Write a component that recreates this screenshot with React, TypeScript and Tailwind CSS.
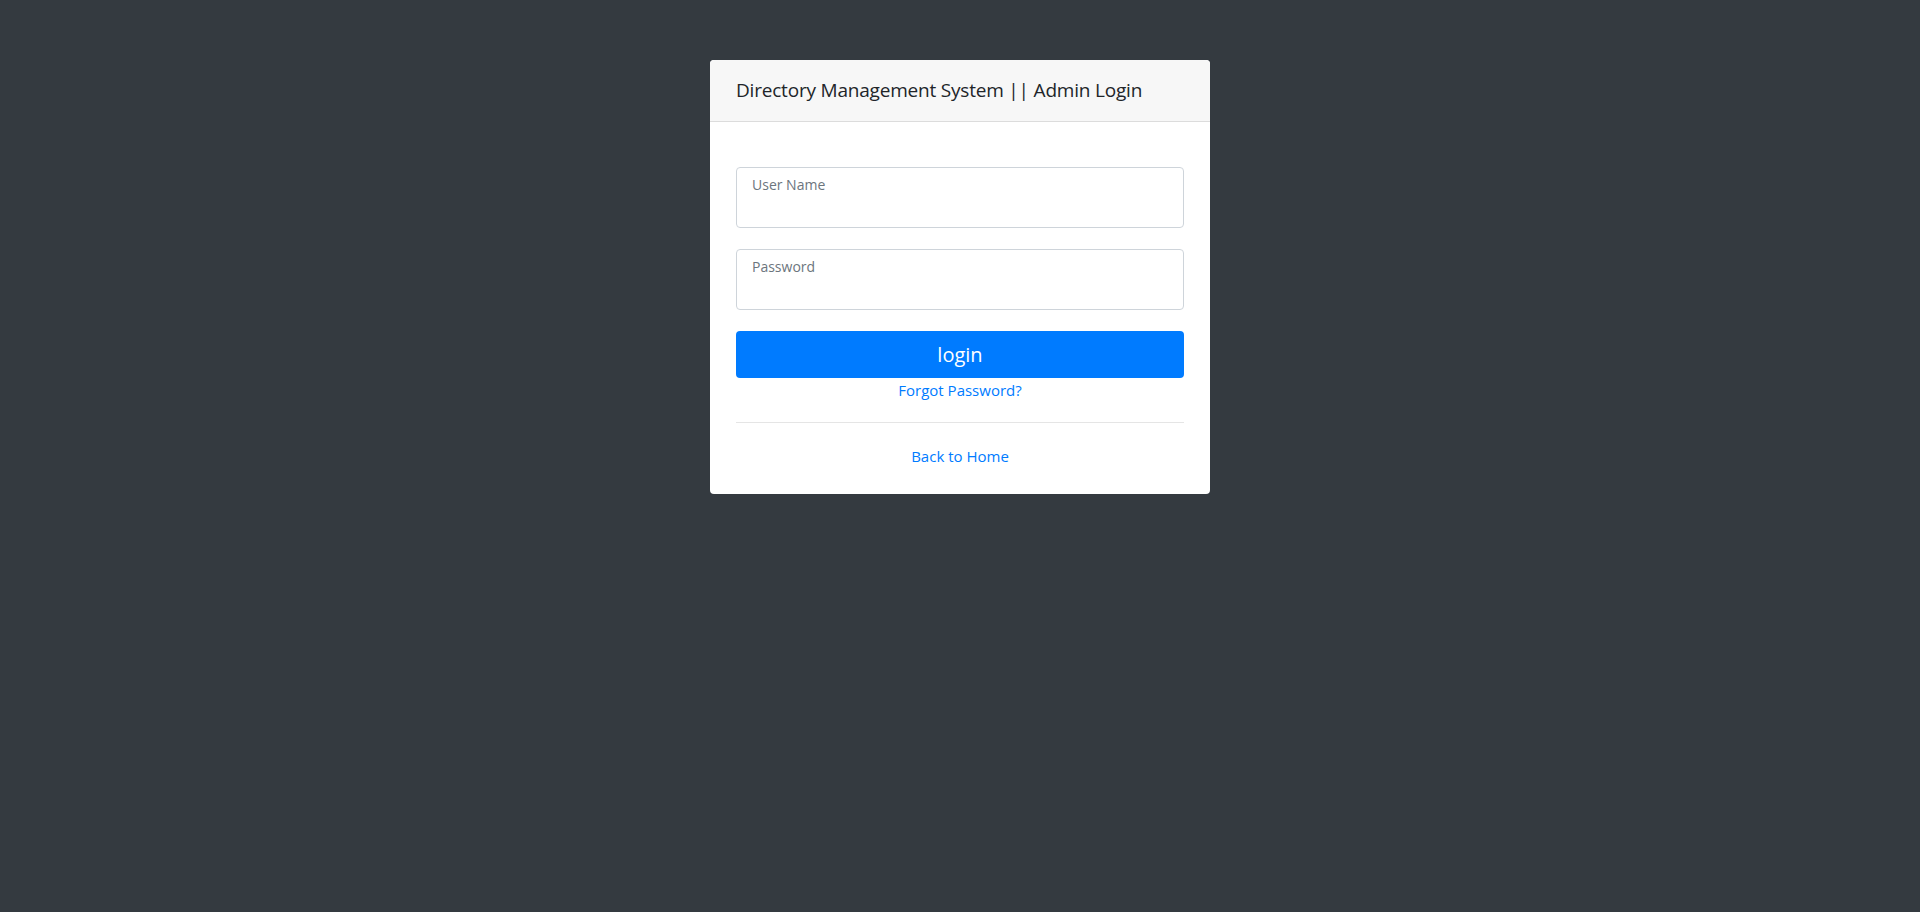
export default function App() {
  return (
    <div className="min-h-screen w-full bg-[#343a40] flex justify-center pt-[60px] font-['Open_Sans',_'Noto_Sans',_sans-serif]">
      {/* login card */}
      <div className="w-[500px] h-fit bg-white rounded-[4px] overflow-hidden">
        <div className="h-[62px] px-[26px] flex items-center bg-[#f7f7f7] border-b border-[#dcdcdc]">
          <h5 className="text-[19px] text-[#212529] tracking-[-0.2px]">Directory Management System || Admin Login</h5>
        </div>
        <form className="px-[26px] pt-[45px] pb-[27px] flex flex-col">
          <textarea
            className="h-[61px] w-full resize-none border border-[#ced4da] rounded-[4px] px-[15px] pt-[6px] text-[14px] text-[#495057] placeholder:text-[#6c757d] outline-none"
            placeholder="User Name"
          />
          <textarea
            className="mt-[21px] h-[61px] w-full resize-none border border-[#ced4da] rounded-[4px] px-[15px] pt-[6px] text-[14px] text-[#495057] placeholder:text-[#6c757d] outline-none"
            placeholder="Password"
          />
          <button type="button" className="mt-[21px] h-[47px] w-full bg-[#007bff] rounded-[4px] text-white text-[20px]">
            login
          </button>
          <a className="mt-[1px] text-center text-[15px] leading-[22px] text-[#007bff]">Forgot Password?</a>
          <hr className="mt-[21px] border-t border-[#e5e5e5]" />
          <a className="mt-[22px] text-center text-[15px] leading-[22px] text-[#007bff]">Back to Home</a>
        </form>
      </div>
    </div>
  )
}
